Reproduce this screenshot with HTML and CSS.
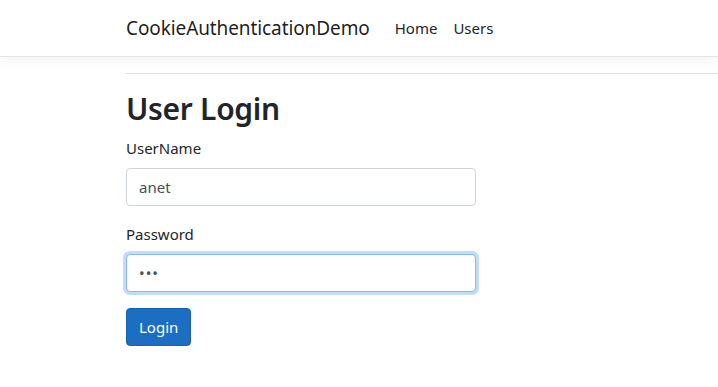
FILE: index.html
```html
<!DOCTYPE html>
<html lang="en">
<head>
  <meta charset="UTF-8" />
  <meta name="viewport" content="width=device-width, initial-scale=1.0"/>
  <title>User Login - CookieAuthenticationDemo</title>
  <link rel="stylesheet" href="styles.css">
</head>
<body>
  <header>
    <nav class="navbar">
      <div class="container nav-inner">
        <a class="navbar-brand" href="#">CookieAuthenticationDemo</a>
        <ul class="nav-links">
          <li><a class="nav-link" href="#">Home</a></li>
          <li><a class="nav-link" href="#">Users</a></li>
        </ul>
      </div>
    </nav>
  </header>

  <div class="container">
    <main>
      <hr />
      <h1>User Login</h1>
      <form>
        <div class="form-group">
          <label for="username">UserName</label>
          <input id="username" class="form-control" type="text" value="anet">
        </div>
        <div class="form-group">
          <label for="password">Password</label>
          <input id="password" class="form-control focused" type="password" value="abc" autofocus>
        </div>
        <button type="button" class="btn-primary">Login</button>
      </form>
    </main>
  </div>
</body>
</html>
```

FILE: styles.css
```css
* {
  box-sizing: border-box;
}

body {
  margin: 0;
  font-family: 'Noto Sans', 'Open Sans', sans-serif;
  font-size: 16px;
  line-height: 1.5;
  color: #212529;
  background: #fff;
  overflow: hidden;
}

.container {
  padding-left: 126px;
}

.navbar {
  height: 57px;
  border-bottom: 1px solid #e5e5e5;
  box-shadow: 0 4px 12px rgba(0, 0, 0, 0.05);
  margin-bottom: 16px;
}

.nav-inner {
  display: flex;
  align-items: center;
  height: 56px;
}

.navbar-brand {
  font-size: 19px;
  color: rgba(0, 0, 0, 0.9);
  text-decoration: none;
  margin-right: 17px;
  letter-spacing: -0.1px;
}

.nav-links {
  display: flex;
  list-style: none;
  margin: 0;
  padding: 0;
}

.nav-link {
  display: block;
  padding: 8px;
  font-size: 15px;
  color: #212529;
  text-decoration: none;
}

hr {
  margin: 0 0 16px;
  border: 0;
  border-top: 1px solid #e2e2e2;
}

h1 {
  font-size: 30px;
  font-weight: 600;
  line-height: 38px;
  margin: 0 0 8px;
  letter-spacing: -0.3px;
}

.form-group {
  margin-bottom: 16px;
}

label {
  display: block;
  font-size: 15px;
  line-height: 24px;
  margin-bottom: 8px;
}

.form-control {
  display: block;
  width: 350px;
  height: 38px;
  padding: 6px 12px;
  font-family: inherit;
  font-size: 15px;
  color: #495057;
  border: 1px solid #ced4da;
  border-radius: 4px;
  outline: none;
}

.form-control.focused {
  border-color: #86b7fe;
  box-shadow: 0 0 0 3px rgba(13, 110, 253, 0.25);
  letter-spacing: 1px;
  caret-color: #212529;
}

.btn-primary {
  height: 38px;
  padding: 6px 12px;
  font-family: inherit;
  font-size: 15px;
  color: #fff;
  background-color: #1b6ec2;
  border: 1px solid #1861ac;
  border-radius: 4px;
}
```
